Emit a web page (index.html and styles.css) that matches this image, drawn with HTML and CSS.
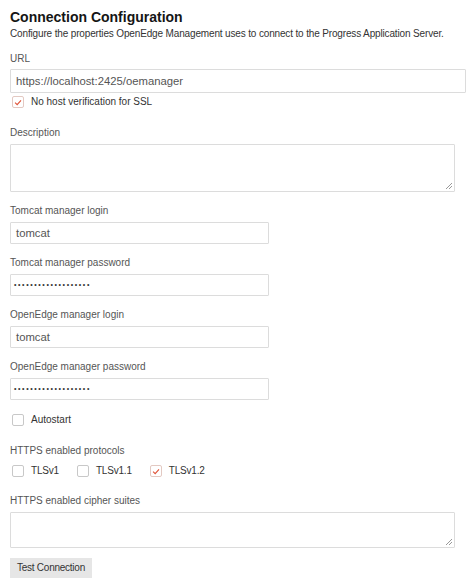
FILE: index.html
```html
<!DOCTYPE html>
<html>
<head>
<meta charset="utf-8">
<link rel="stylesheet" href="styles.css">
</head>
<body>
<div class="page">
  <h1 class="title">Connection Configuration</h1>
  <p class="intro">Configure the properties OpenEdge Management uses to connect to the Progress Application Server.</p>

  <div class="field field-url">
    <label class="label">URL</label>
    <div class="input input-wide input-url">https://localhost:2425/oemanager</div>
    <div class="check-row check-ssl">
      <span class="box checked"><svg viewBox="0 0 12 12" class="tick"><path d="M2.5 6.2 L5 8.6 L9.6 3.4"/></svg></span>
      <span class="check-text">No host verification for SSL</span>
    </div>
  </div>

  <div class="field field-desc">
    <label class="label">Description</label>
    <div class="textarea textarea-desc"><span class="grip"></span></div>
  </div>

  <div class="field">
    <label class="label">Tomcat manager login</label>
    <div class="input input-half">tomcat</div>
  </div>
  <div class="field">
    <label class="label">Tomcat manager password</label>
    <div class="input input-half dots">•••••••••••••••••••</div>
  </div>
  <div class="field">
    <label class="label">OpenEdge manager login</label>
    <div class="input input-half">tomcat</div>
  </div>
  <div class="field">
    <label class="label">OpenEdge manager password</label>
    <div class="input input-half dots">•••••••••••••••••••</div>
  </div>

  <div class="check-row check-auto">
    <span class="box"></span>
    <span class="check-text">Autostart</span>
  </div>

  <div class="field field-proto">
    <label class="label">HTTPS enabled protocols</label>
    <div class="proto-row">
      <div class="check-row">
        <span class="box"></span>
        <span class="check-text">TLSv1</span>
      </div>
      <div class="check-row">
        <span class="box"></span>
        <span class="check-text">TLSv1.1</span>
      </div>
      <div class="check-row">
        <span class="box checked"><svg viewBox="0 0 12 12" class="tick"><path d="M2.5 6.2 L5 8.6 L9.6 3.4"/></svg></span>
        <span class="check-text">TLSv1.2</span>
      </div>
    </div>
  </div>

  <div class="field field-cipher">
    <label class="label">HTTPS enabled cipher suites</label>
    <div class="textarea textarea-cipher"><span class="grip"></span></div>
  </div>

  <button class="btn">Test Connection</button>
</div>
</body>
</html>
```

FILE: styles.css
```css
html, body {
  margin: 0;
  padding: 0;
  background: #ffffff;
}

.page {
  font-family: "Liberation Sans", Arial, sans-serif;
  color: #555555;
  padding: 8px 0 0 10px;
  width: 456px;
}

.title {
  margin: 0;
  font-size: 14px;
  font-weight: bold;
  color: #151515;
  line-height: 18px;
}

.intro {
  margin: 0;
  font-size: 10px;
  letter-spacing: -0.15px;
  line-height: 16px;
  color: #333333;
  white-space: nowrap;
}

.field {
  display: flex;
  flex-direction: column;
  align-items: flex-start;
  margin-bottom: 12px;
}

.label {
  display: block;
  font-size: 10px;
  line-height: 14px;
  color: #555555;
  margin-bottom: 4px;
}

.field-url {
  margin-top: 10px;
  margin-bottom: 17px;
}

.field-url .label {
  margin-bottom: 3px;
}

.input {
  box-sizing: border-box;
  height: 22px;
  border: 1px solid #dcdcdc;
  border-radius: 1px;
  padding: 0 5px;
  font-size: 11.3px;
  line-height: 20px;
  color: #555555;
  background: #ffffff;
}

.input-wide {
  width: 456px;
}

.input-url {
  height: 24px;
  line-height: 22px;
}

.input-half {
  width: 259px;
}

.dots {
  font-size: 7px;
  letter-spacing: 1.6px;
  color: #333333;
  padding-left: 3px;
}

.textarea {
  box-sizing: border-box;
  position: relative;
  width: 445px;
  border: 1px solid #dcdcdc;
  border-radius: 1px;
  background: #ffffff;
}

.textarea-desc {
  height: 48px;
}

.textarea-cipher {
  height: 36px;
}

.grip {
  position: absolute;
  right: 2px;
  bottom: 2px;
  width: 6px;
  height: 6px;
  background: linear-gradient(135deg, transparent 0 45%, #999 45% 55%, transparent 55% 70%, #999 70% 80%, transparent 80%);
}

.field-desc {
  margin-bottom: 12px;
}

.check-row {
  display: flex;
  align-items: center;
  gap: 7px;
  height: 14px;
}

.check-ssl {
  margin-top: 2px;
  margin-left: 2px;
}

.check-auto {
  margin: 13px 0 17px 2px;
}

.box {
  box-sizing: border-box;
  width: 12px;
  height: 12px;
  border: 1px solid #c8c8c8;
  border-radius: 2px;
  background: #ffffff;
  display: flex;
  align-items: center;
  justify-content: center;
}

.box.checked {
  border-color: #e3c9c2;
}

.tick {
  width: 11px;
  height: 11px;
}

.tick path {
  fill: none;
  stroke: #e0553a;
  stroke-width: 1.4;
}

.check-text {
  font-size: 10px;
  line-height: 14px;
  color: #333333;
}

.proto-row {
  display: flex;
  gap: 18px;
  margin-left: 2px;
  margin-top: 2px;
}

.proto-row .check-text {
  letter-spacing: -0.2px;
}

.field-proto {
  margin-bottom: 16px;
}

.field-cipher {
  margin-bottom: 10px;
}

.btn {
  display: block;
  height: 20px;
  padding: 0 0 0 7px;
  border: none;
  border-radius: 0;
  background: #e6e6e6;
  color: #333333;
  font-family: "Liberation Sans", Arial, sans-serif;
  font-size: 10px;
  letter-spacing: -0.25px;
  line-height: 20px;
  width: 82px;
  text-align: left;
  white-space: nowrap;
}
```
